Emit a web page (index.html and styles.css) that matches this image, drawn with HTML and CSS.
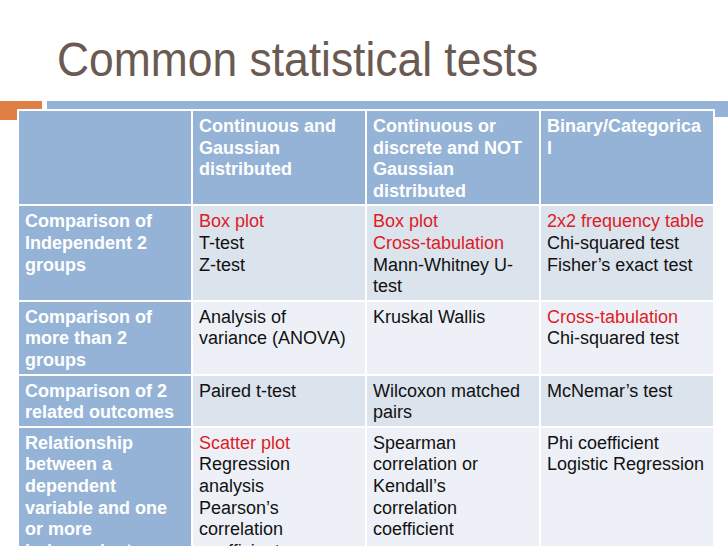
FILE: index.html
```html
<!DOCTYPE html>
<html>
<head>
<meta charset="utf-8">
<link rel="stylesheet" href="styles.css">
</head>
<body>
<div class="slide">
  <h1 class="title"><span class="title-text">Common statistical tests</span></h1>
  <div class="stage">
    <div class="deco-orange"></div>
    <div class="deco-orange-tail"></div>
    <div class="deco-bar"></div>
    <table class="grid">
      <colgroup><col class="c"><col class="c"><col class="c"><col class="c"></colgroup>
      <tr class="head">
        <th></th>
        <th>Continuous and<br>Gaussian<br>distributed</th>
        <th>Continuous or<br>discrete and NOT<br>Gaussian<br>distributed</th>
        <th>Binary/Categorica<br>l</th>
      </tr>
      <tr class="band-a">
        <th>Comparison of<br>Independent 2<br>groups</th>
        <td><span class="red">Box plot</span><br>T-test<br>Z-test</td>
        <td><span class="red">Box plot</span><br><span class="red">Cross-tabulation</span><br>Mann-Whitney U-<br>test</td>
        <td><span class="red">2x2 frequency table</span><br>Chi-squared test<br>Fisher’s exact test</td>
      </tr>
      <tr class="band-b">
        <th>Comparison of<br>more than 2<br>groups</th>
        <td>Analysis of<br>variance (ANOVA)</td>
        <td>Kruskal Wallis</td>
        <td><span class="red">Cross-tabulation</span><br>Chi-squared test</td>
      </tr>
      <tr class="band-a">
        <th>Comparison of 2<br>related outcomes</th>
        <td>Paired t-test</td>
        <td>Wilcoxon matched<br>pairs</td>
        <td>McNemar’s test</td>
      </tr>
      <tr class="band-b">
        <th>Relationship<br>between a<br>dependent<br>variable and one<br>or more<br>independent<br>variables</th>
        <td><span class="red">Scatter plot</span><br>Regression<br>analysis<br>Pearson’s<br>correlation<br>coefficient</td>
        <td>Spearman<br>correlation or<br>Kendall’s<br>correlation<br>coefficient</td>
        <td>Phi coefficient<br>Logistic Regression</td>
      </tr>
    </table>
  </div>
</div>
</body>
</html>
```
FILE: styles.css
```css
html, body {
  margin: 0;
  padding: 0;
  width: 728px;
  height: 546px;
  overflow: hidden;
  background: #ffffff;
}
.slide {
  width: 728px;
  height: 546px;
  overflow: hidden;
  font-family: "Liberation Sans", Arial, sans-serif;
}
.title {
  margin: 0;
  height: 101px;
  padding-left: 57px;
  box-sizing: border-box;
  padding-top: 33px;
  font-weight: normal;
  font-size: 48px;
  line-height: 54px;
  color: #6b5a52;
  white-space: nowrap;
}
.title-text {
  display: inline-block;
  transform: scaleX(0.925);
  transform-origin: left center;
}
.stage {
  position: relative;
  padding-top: 8px;
  padding-left: 17px;
}
.deco-orange {
  position: absolute;
  left: 0;
  top: 0;
  width: 42px;
  height: 12px;
  background: #df7f45;
}
.deco-orange-tail {
  position: absolute;
  left: 0;
  top: 0;
  width: 17px;
  height: 19px;
  background: #df7f45;
}
.deco-bar {
  position: absolute;
  left: 47px;
  right: 0;
  top: 0;
  height: 16px;
  background: #95b3d6;
}
.grid {
  position: relative;
  border-collapse: collapse;
  table-layout: fixed;
  width: 697px;
  font-size: 18px;
  line-height: 21.6px;
  white-space: nowrap;
}
.grid col.c {
  width: 174px;
}
.grid th, .grid td {
  border: 2px solid #ffffff;
  padding: 5px 6px 2px 6px;
  vertical-align: top;
  text-align: left;
}
.grid th {
  background: #95b3d6;
  color: #ffffff;
  font-weight: bold;
}
.grid td {
  color: #111111;
  font-weight: normal;
}
.band-a td {
  background: #dbe3ed;
}
.band-b td {
  background: #edf1f7;
}
.red {
  color: #dd1c26;
}
```
